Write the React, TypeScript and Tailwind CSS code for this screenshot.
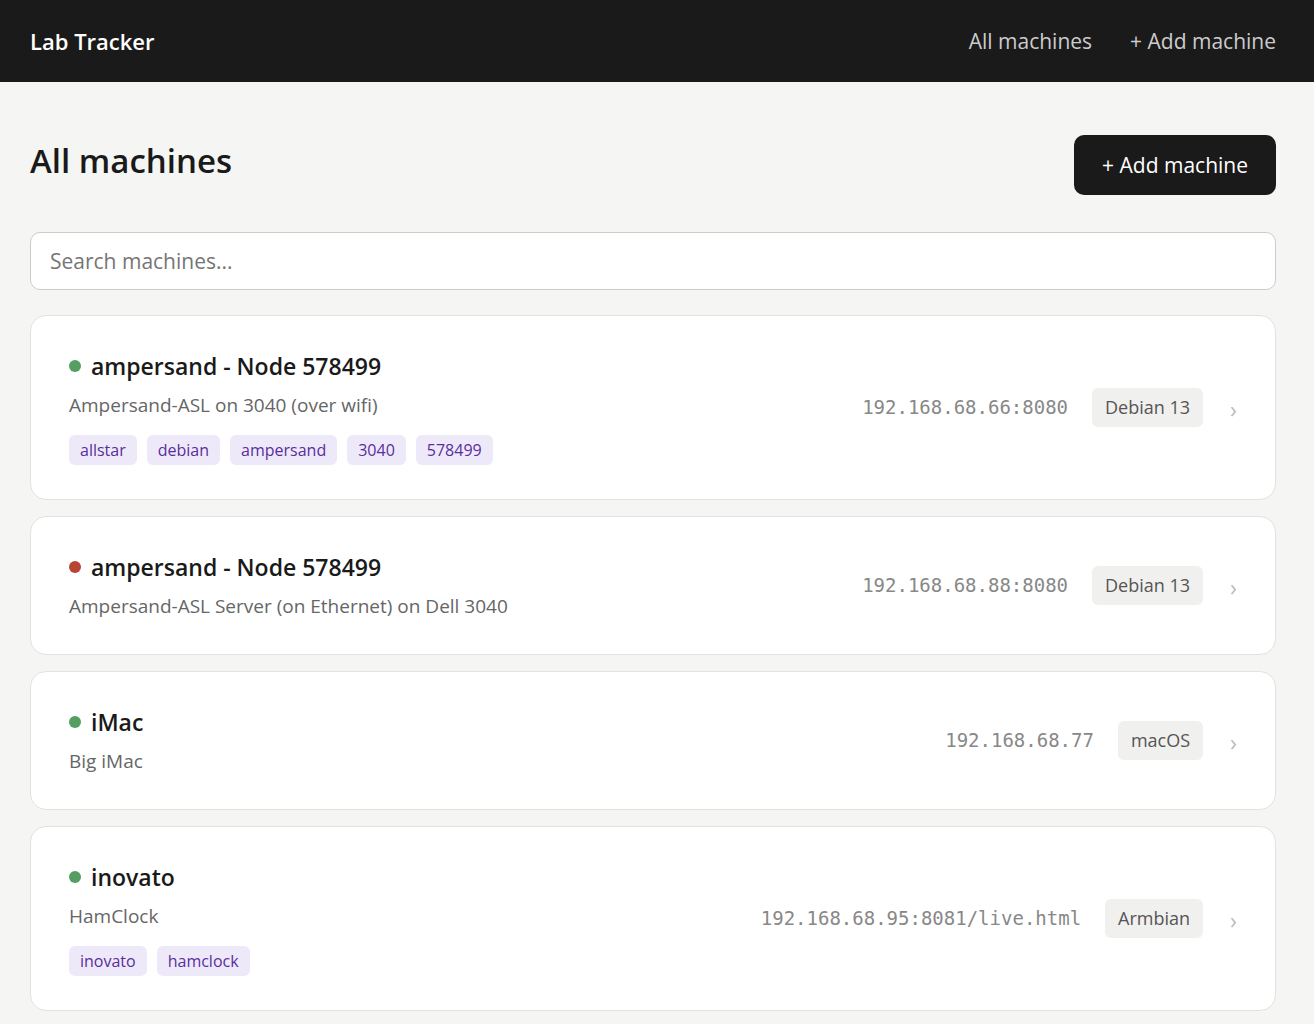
import { useState } from "react";

type Machine = {
  name: string;
  description: string;
  address: string;
  os: string;
  online: boolean;
  tags: string[];
};

const machines: Machine[] = [
  { name: "ampersand - Node 578499", description: "Ampersand-ASL on 3040 (over wifi)", address: "192.168.68.66:8080", os: "Debian 13", online: true, tags: ["allstar", "debian", "ampersand", "3040", "578499"] },
  { name: "ampersand - Node 578499", description: "Ampersand-ASL Server (on Ethernet) on Dell 3040", address: "192.168.68.88:8080", os: "Debian 13", online: false, tags: [] },
  { name: "iMac", description: "Big iMac", address: "192.168.68.77", os: "macOS", online: true, tags: [] },
  { name: "inovato", description: "HamClock", address: "192.168.68.95:8081/live.html", os: "Armbian", online: true, tags: ["inovato", "hamclock"] },
];

function MachineCard({ machine }: { machine: Machine }) {
  return (
    <a href="#" className="flex items-center justify-between rounded-2xl border border-[#e2e2df] bg-white px-[38px] py-[34px]">
      <div>
        <h2 className="flex items-center gap-[10px] text-[23px] leading-[32px] font-semibold text-[#1a1a1a]">
          <span className={`size-3 rounded-full ${machine.online ? "bg-[#559e63]" : "bg-[#b94434]"}`} />
          {machine.name}
        </h2>
        <p className="mt-[9px] text-[19px] leading-[28px] text-[#666]">{machine.description}</p>
        {machine.tags.length > 0 && (
          <ul className="mt-4 flex gap-[10px]">
            {machine.tags.map((tag) => (
              <li key={tag} className="rounded-md bg-[#eee9f9] px-[11px] text-[16px] leading-[30px] text-[#5a2d9e]">{tag}</li>
            ))}
          </ul>
        )}
      </div>
      <div className="flex items-center">
        <span className="font-['DejaVu_Sans_Mono',monospace] text-[19px] text-[#888]">{machine.address}</span>
        <span className="ml-6 rounded-md bg-[#f0f0ee] px-[13px] text-[18px] leading-[39px] text-[#555]">{machine.os}</span>
        <span className="ml-[27px] pt-0.5 text-[23px] leading-[34px] text-[#bbb]">›</span>
      </div>
    </a>
  );
}

export default function App() {
  const [query, setQuery] = useState("");
  const shown = machines.filter((m) => m.name.toLowerCase().includes(query.toLowerCase()));
  return (
    <div className="min-h-screen bg-[#f5f5f3] font-['Open_Sans','Noto_Sans',sans-serif] text-[#1a1a1a]">
      <header className="flex h-[82px] items-center justify-between bg-[#1a1a1a] pr-[38px] pl-[30px]">
        <a href="#" className="text-[22px] font-semibold text-white">Lab Tracker</a>
        <nav className="flex gap-[38px] text-[21px] leading-[34px] text-[#ccc]">
          <a href="#">All machines</a>
          <a href="#">+ Add machine</a>
        </nav>
      </header>
      <main className="pt-[53px] pr-[38px] pb-4 pl-[30px]">
        <div className="flex items-start justify-between">
          <h1 className="text-[33px] leading-[52px] font-semibold">All machines</h1>
          <button type="button" className="rounded-[10px] bg-[#1a1a1a] px-7 text-[21px] leading-[60px] text-white">+ Add machine</button>
        </div>
        <input
          type="text"
          aria-label="Search machines"
          placeholder="Search machines..."
          value={query}
          onChange={(e) => setQuery(e.target.value)}
          className="mt-[37px] block h-[58px] w-full rounded-[10px] border border-[#ccc] bg-white px-[19px] text-[21px] placeholder:text-[#757575]"
        />
        <div className="mt-[25px] flex flex-col gap-4">
          {shown.map((m) => (
            <MachineCard key={m.address} machine={m} />
          ))}
        </div>
      </main>
    </div>
  );
}
